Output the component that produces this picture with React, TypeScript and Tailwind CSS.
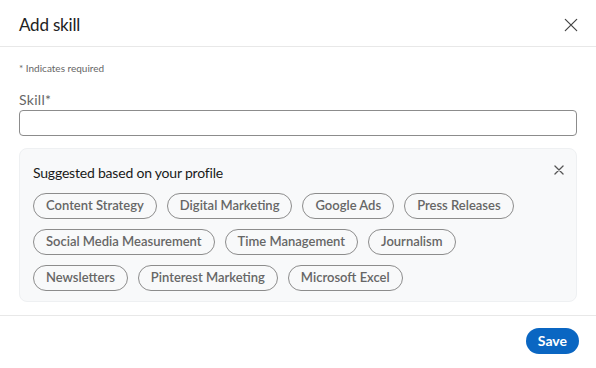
import React from "react";

const skills = [
  ["Content Strategy", "Digital Marketing", "Google Ads", "Press Releases"],
  ["Social Media Measurement", "Time Management", "Journalism"],
  ["Newsletters", "Pinterest Marketing", "Microsoft Excel"],
];

function CloseIcon({ size, stroke }: { size: number; stroke: number }) {
  return (
    <svg width={size} height={size} viewBox="0 0 16 16" fill="none" stroke="currentColor" strokeWidth={stroke} strokeLinecap="round">
      <path d="M1.5 1.5l13 13M14.5 1.5l-13 13" />
    </svg>
  );
}

export default function App() {
  return (
    <div className="w-[596px] h-[368px] bg-white flex flex-col text-[#191919]" style={{ fontFamily: 'Lato, "Open Sans", sans-serif' }}>
      <div className="h-[47px] shrink-0 flex items-center justify-between pl-[19px] pr-[18px] pt-[3px] border-b border-[#e8e8e8]">
        <h2 className="text-[17px] leading-none tracking-[-0.2px] text-[#222]">Add skill</h2>
        <button className="text-[#444]">
          <CloseIcon size={14} stroke={1.4} />
        </button>
      </div>

      <div className="flex-1 px-[19px] pt-[14px] border-b border-[#e8e8e8]">
        <p className="text-[10px] leading-[14px] text-[#666]">* Indicates required</p>
        <label className="block mt-[16px] text-[14px] leading-[18px] tracking-[0.3px] text-[#666]">Skill*</label>
        <input className="block w-full h-[26px] mt-[1px] rounded-[4px] border border-[#8c8c8c] outline-none px-2" />

        <div className="mt-[12px] h-[154px] rounded-[8px] bg-[#f8f9fa] border border-[#eef0f2] pl-[13px] pr-[14px] pt-[15px]">
          <div className="flex items-center justify-between">
            <h3 className="text-[14px] leading-[18px] font-normal tracking-[-0.2px] text-[#191919]">Suggested based on your profile</h3>
            <button className="text-[#555] -mr-[2px] -mt-[6px]">
              <CloseIcon size={10} stroke={2} />
            </button>
          </div>
          <div className="mt-[11px] flex flex-col gap-[10px]">
            {skills.map((row, i) => (
              <div key={i} className="flex gap-[10px]">
                {row.map((s) => (
                  <span
                    key={s}
                    className="h-[26px] px-[12px] flex items-center rounded-full border border-[#8c8c8c] text-[13px] text-[#666] font-semibold"
                  >
                    {s}
                  </span>
                ))}
              </div>
            ))}
          </div>
        </div>
      </div>

      <div className="h-[52px] shrink-0 flex items-center justify-end pr-[17px] pb-[2px]">
        <button className="h-[26px] px-[12px] rounded-full bg-[#0a66c2] text-white text-[14px] font-bold leading-none">Save</button>
      </div>
    </div>
  );
}
